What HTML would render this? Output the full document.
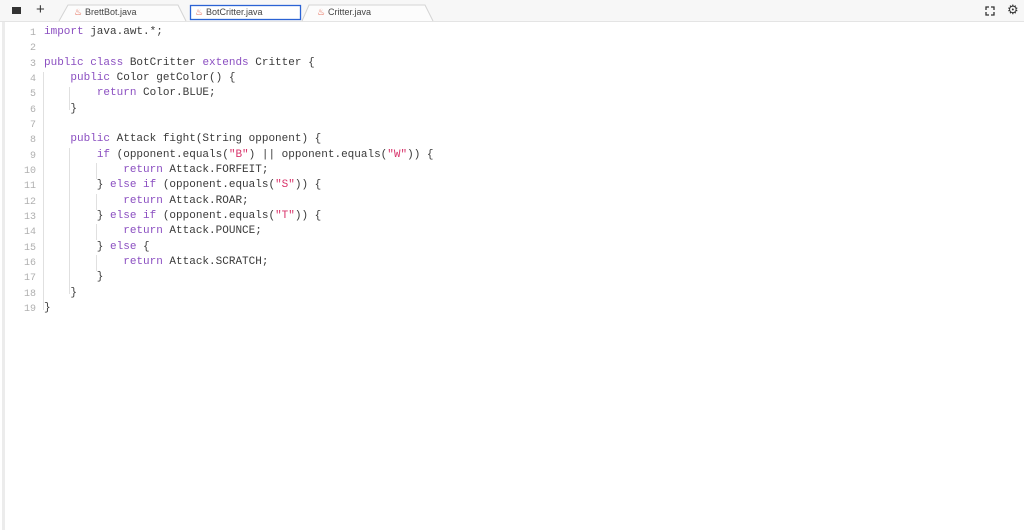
<!DOCTYPE html>
<html><head><style>
body{margin:0;width:1024px;height:530px;background:#fff;position:relative;overflow:hidden;font-family:"Liberation Sans",sans-serif}
.bar{position:absolute;left:0;top:0;width:1024px;height:21px;background:#f7f7f7;border-bottom:1px solid #e4e4e4}
.tab{position:absolute;top:4px;height:17px;font-size:9px;color:#444;line-height:17px}
.lbl{position:absolute;top:0;white-space:nowrap}
.jv{color:#e0523a;font-size:9px;position:absolute;top:0}
.lb{position:absolute;left:2px;top:22px;width:3px;height:508px;background:#ececec}
.code{position:absolute;left:0;top:25px;font-family:"Liberation Mono",monospace;font-size:11px;line-height:15.33px;color:#3a3a3a}
.ln{position:absolute;width:36px;text-align:right;color:#b0b0b0;font-size:10px}
.tx{position:absolute;left:44px;white-space:pre}
.k{color:#8b4fc1}.s{color:#d8336a}
.g{position:absolute;width:1px;background:#e0e0e0}
</style></head><body>
<div class="bar"></div>
<div style="position:absolute;left:12px;top:7px;width:9px;height:7px;background:#333"></div>
<div style="position:absolute;left:36px;top:2px;font-size:15px;color:#333;line-height:16px">+</div>
<svg style="position:absolute;left:0;top:3px" width="450" height="19">
<path d="M59 18 L68 2 H178 L186 18" fill="#fcfcfc" stroke="#d4d4d4"/>
<path d="M302 18 L309 2 H425 L433 18" fill="#fcfcfc" stroke="#d4d4d4"/>
<rect x="190.5" y="2.5" width="110" height="14" fill="#fff" stroke="#2b63d4" stroke-width="1.3"/>
</svg>
<div class="tab" style="left:74px"><span class="jv" style="left:0">♨</span><span class="lbl" style="left:11px">BrettBot.java</span></div>
<div class="tab" style="left:195px"><span class="jv" style="left:0">♨</span><span class="lbl" style="left:11px">BotCritter.java</span></div>
<div class="tab" style="left:317px"><span class="jv" style="left:0">♨</span><span class="lbl" style="left:11px">Critter.java</span></div>
<svg style="position:absolute;left:985px;top:6px" width="10" height="10"><path d="M1 4V1H4M6 1H9V4M9 6V9H6M4 9H1V6" fill="none" stroke="#333" stroke-width="1.3"/></svg>
<div style="position:absolute;left:1007px;top:2px;font-size:13px;color:#333">⚙</div>
<div class="lb"></div>
<div class="g" style="left:43px;top:72px;height:238px"></div>
<div class="g" style="left:69px;top:87px;height:23px"></div>
<div class="g" style="left:69px;top:148px;height:146px"></div>
<div class="g" style="left:96px;top:163px;height:16px"></div>
<div class="g" style="left:96px;top:194px;height:16px"></div>
<div class="g" style="left:96px;top:224px;height:16px"></div>
<div class="g" style="left:96px;top:255px;height:16px"></div>
<div class="code">
<div class="ln" style="top:1px">1</div><div class="tx" style="top:0"><span class="k">import</span> java.awt.*;</div>
<div class="ln" style="top:16.3px">2</div>
<div class="ln" style="top:31.7px">3</div><div class="tx" style="top:30.7px"><span class="k">public class</span> BotCritter <span class="k">extends</span> Critter {</div>
<div class="ln" style="top:47px">4</div><div class="tx" style="top:46px">    <span class="k">public</span> Color getColor() {</div>
<div class="ln" style="top:62.3px">5</div><div class="tx" style="top:61.3px">        <span class="k">return</span> Color.BLUE;</div>
<div class="ln" style="top:77.7px">6</div><div class="tx" style="top:76.7px">    }</div>
<div class="ln" style="top:93px">7</div>
<div class="ln" style="top:108.3px">8</div><div class="tx" style="top:107.3px">    <span class="k">public</span> Attack fight(String opponent) {</div>
<div class="ln" style="top:123.6px">9</div><div class="tx" style="top:122.6px">        <span class="k">if</span> (opponent.equals(<span class="s">"B"</span>) || opponent.equals(<span class="s">"W"</span>)) {</div>
<div class="ln" style="top:139px">10</div><div class="tx" style="top:138px">            <span class="k">return</span> Attack.FORFEIT;</div>
<div class="ln" style="top:154.3px">11</div><div class="tx" style="top:153.3px">        } <span class="k">else if</span> (opponent.equals(<span class="s">"S"</span>)) {</div>
<div class="ln" style="top:169.6px">12</div><div class="tx" style="top:168.6px">            <span class="k">return</span> Attack.ROAR;</div>
<div class="ln" style="top:185px">13</div><div class="tx" style="top:184px">        } <span class="k">else if</span> (opponent.equals(<span class="s">"T"</span>)) {</div>
<div class="ln" style="top:200.3px">14</div><div class="tx" style="top:199.3px">            <span class="k">return</span> Attack.POUNCE;</div>
<div class="ln" style="top:215.6px">15</div><div class="tx" style="top:214.6px">        } <span class="k">else</span> {</div>
<div class="ln" style="top:231px">16</div><div class="tx" style="top:230px">            <span class="k">return</span> Attack.SCRATCH;</div>
<div class="ln" style="top:246.3px">17</div><div class="tx" style="top:245.3px">        }</div>
<div class="ln" style="top:261.6px">18</div><div class="tx" style="top:260.6px">    }</div>
<div class="ln" style="top:277px">19</div><div class="tx" style="top:276px">}</div>
</div>
</body></html>
